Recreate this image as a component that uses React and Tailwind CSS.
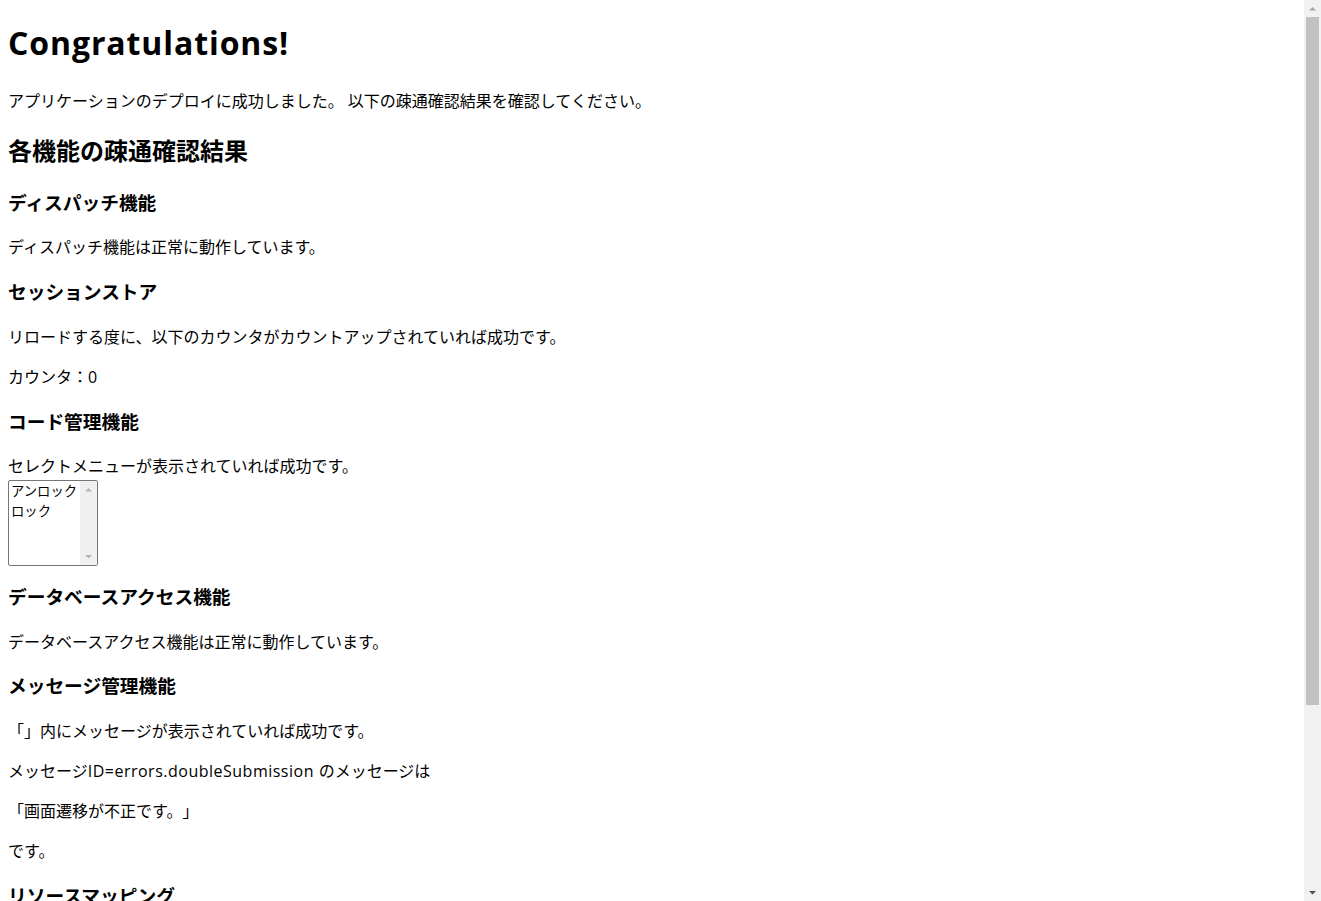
import React from "react";

const Arrow = ({ down = false, color }) => (
  <svg width="17" height="17" viewBox="0 0 17 17" className="block">
    {down ? (
      <polygon points="5,7 12,7 8.5,10.5" fill={color} />
    ) : (
      <polygon points="5,10.5 12,10.5 8.5,7" fill={color} />
    )}
  </svg>
);

// the window's scrollbar at the right edge, thumb at the top
const PageScrollbar = () => (
  <div className="w-[17px] h-screen shrink-0 bg-[#f1f1f1] flex flex-col sticky top-0">
    <Arrow color="#a3a3a3" />
    <div className="flex-1 flex flex-col">
      <div className="h-[688px] mx-[2px] bg-[#c1c1c1]" />
    </div>
    <Arrow down color="#505050" />
  </div>
);

const H3 = ({ children, className = "mt-[18.72px]" }) => (
  <h3 className={"text-[18.72px] leading-[28px] font-bold mb-[18.72px] " + className}>{children}</h3>
);

const P = ({ children }) => (
  <p className="text-[16px] leading-[24px] my-[16px]">{children}</p>
);

const Latin = ({ children }) => <span className="tracking-[0.5px]">{children}</span>;

export default function App() {
  return (
    <div className="flex items-start h-screen overflow-hidden bg-white">
      <div className="flex-1 px-[8px] pt-px pb-[8px] text-black [text-spacing-trim:space-all] font-['Open_Sans','Noto_Sans_CJK_JP',sans-serif]">
        <h1 className="text-[32px] leading-[48px] font-bold tracking-[0.9px] mt-[18.44px] mb-[21.44px]">
          Congratulations!
        </h1>
        <P>アプリケーションのデプロイに成功しました。 以下の疎通確認結果を確認してください。</P>

        <h2 className="text-[24px] leading-[36px] font-bold my-[19.92px]">各機能の疎通確認結果</h2>

        <H3>ディスパッチ機能</H3>
        <P>ディスパッチ機能は正常に動作しています。</P>

        <H3>セッションストア</H3>
        <P>リロードする度に、以下のカウンタがカウントアップされていれば成功です。</P>
        <P>
          カウンタ：<Latin>0</Latin>
        </P>

        <H3>コード管理機能</H3>
        <p className="text-[16px] leading-[24px] mt-[16px]">セレクトメニューが表示されていれば成功です。</p>
        <div className="mt-[2px] flex w-[90px] h-[86px] border border-[#767676] rounded-[2px] overflow-hidden">
          <select size={4} className="flex-1 min-w-0 h-full text-[13.333px] overflow-hidden outline-none">
            <option value="0" className="px-[2px] pt-0 pb-px leading-[20px]">
              アンロック
            </option>
            <option value="1" className="px-[2px] pt-0 pb-px leading-[20px]">
              ロック
            </option>
          </select>
          <div className="w-[17px] shrink-0 bg-[#f0f0f0] flex flex-col justify-between">
            <Arrow color="#b4b4b4" />
            <Arrow down color="#b4b4b4" />
          </div>
        </div>

        <H3 className="mt-[16.72px]">データベースアクセス機能</H3>
        <P>データベースアクセス機能は正常に動作しています。</P>

        <H3>メッセージ管理機能</H3>
        <P>「」内にメッセージが表示されていれば成功です。</P>
        <P>
          メッセージ<Latin>ID=errors.doubleSubmission </Latin>のメッセージは
        </P>
        <P>「画面遷移が不正です。」</P>
        <P>です。</P>

        <H3>リソースマッピング</H3>
        <P>以下に画像が表示されていれば成功です。</P>
      </div>
      <PageScrollbar />
    </div>
  );
}
